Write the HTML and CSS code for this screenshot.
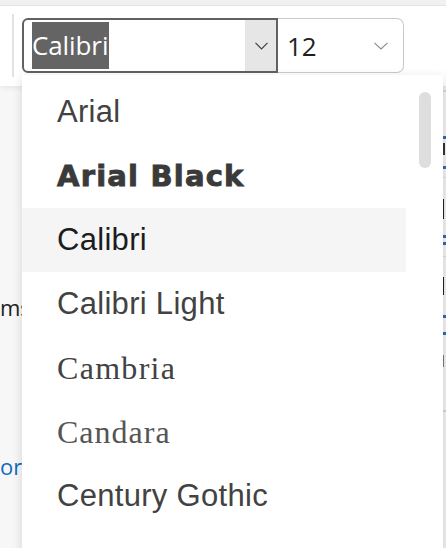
FILE: index.html
```html
<!DOCTYPE html>
<html>
<head>
<meta charset="utf-8">
<link rel="stylesheet" href="styles.css">
</head>
<body>
<div class="app">
  <div class="topstrip"></div>
  <div class="toolbar">
    <div class="sep"></div>
    <div class="combo font-combo">
      <div class="field"><span class="sel">Calibri</span></div>
      <div class="btn">
        <svg width="13" height="8" viewBox="0 0 13 8"><path d="M0.5 0.8 L6.5 6.8 L12.5 0.8" fill="none" stroke="#404040" stroke-width="1.2"/></svg>
      </div>
    </div>
    <div class="combo size-combo">
      <div class="field size-field">12</div>
      <div class="btn2">
        <svg width="14" height="8" viewBox="0 0 14 8"><path d="M0.5 0.8 L7 7 L13.5 0.8" fill="none" stroke="#8a8a8a" stroke-width="1.1"/></svg>
      </div>
    </div>
  </div>
  <div class="page">
    <div class="left-col">
      <div class="l1">ms</div>
      <div class="l2">or</div>
    </div>
    <div class="right-col">
      <div class="r r-gray1"></div>
      <div class="r r-blue1"></div>
      <div class="r r-black1"></div>
      <div class="r r-blue2"></div>
      <div class="r r-line1"></div>
      <div class="r r-black2"></div>
      <div class="r r-blue3"></div>
      <div class="r r-blue4"></div>
      <div class="r r-line2"></div>
      <div class="r r-black3"></div>
      <div class="r r-blue5"></div>
      <div class="r r-blue6"></div>
      <div class="r r-black4"></div>
      <div class="r r-line3"></div>
    </div>
  </div>

  <div class="dropdown">
    <div class="list">
      <div class="item f-arial">Arial</div>
      <div class="item f-black">Arial Black</div>
      <div class="item f-calibri active">Calibri</div>
      <div class="item f-light">Calibri Light</div>
      <div class="item f-cambria">Cambria</div>
      <div class="item f-candara">Candara</div>
      <div class="item f-century">Century Gothic</div>
    </div>
    <div class="track"><div class="thumb"></div></div>
  </div>
</div>
</body>
</html>
```
FILE: styles.css
```css
html, body {
  margin: 0;
  padding: 0;
}
body {
  width: 446px;
  height: 548px;
  overflow: hidden;
  background: #f6f6f6;
  font-family: "Open Sans", "Noto Sans", sans-serif;
}
.app {
  position: relative;
  width: 446px;
  height: 548px;
  overflow: hidden;
  display: flex;
  flex-direction: column;
}
.topstrip {
  height: 5px;
  background: #f1f1f1;
  border-bottom: 1px solid #e6e6e6;
  flex: none;
}
.toolbar {
  height: 80px;
  flex: none;
  background: #fff;
  display: flex;
  align-items: flex-start;
  box-shadow: 0 2px 5px rgba(0,0,0,0.07);
  position: relative;
  z-index: 1;
}
.sep {
  width: 2px;
  height: 63px;
  background: #e2e2e2;
  margin: 8px 8px 0 12px;
}
.combo {
  margin-top: 12px;
  height: 55px;
  box-sizing: border-box;
  display: flex;
}
.font-combo {
  width: 256px;
  border: 2px solid #616161;
  border-radius: 6px 0 0 6px;
}
.field {
  flex: 1;
  display: flex;
  align-items: center;
  padding-left: 8px;
}
.sel {
  background: #646464;
  color: #fff;
  font-size: 26px;
  line-height: 47px;
  height: 47px;
  padding-right: 1px;
  letter-spacing: -0.1px;
}
.btn {
  width: 30px;
  background: #e6e6e6;
  display: flex;
  align-items: center;
  justify-content: center;
  padding-left: 1px;
}
.size-combo {
  width: 126px;
  border: 1.5px solid #c9c9c9;
  border-left: none;
  border-radius: 0 7px 7px 0;
}
.size-field {
  padding-left: 9px;
  font-size: 26px;
  color: #1f1f1f;
}
.btn2 {
  width: 40px;
  display: flex;
  align-items: center;
  justify-content: center;
  padding-right: 2px;
}
.page {
  flex: 1;
  display: flex;
  justify-content: space-between;
  background: #f7f7f7;
}
.left-col {
  width: 40px;
  font-family: "Open Sans", sans-serif;
  font-size: 22px;
}
.l1 {
  margin-top: 206px;
  color: #222;
}
.l2 {
  margin-top: 129px;
  color: #0f6cbd;
}
.right-col {
  width: 4px;
  display: flex;
  flex-direction: column;
  background: #f0f0f0;
}
.r { flex: none; width: 4px; }
.r-gray1 { height: 2px; margin-top: 4px; background: #d8d8d8; }
.r-blue1 { height: 3px; margin-top: 44px; background: #2b6cb5; }
.r-black1 { height: 12px; margin-top: 4px; background: #333; width: 3px; }
.r-blue2 { height: 3px; margin-top: 11px; background: #2b6cb5; }
.r-line1 { height: 1px; margin-top: 8px; background: #dcdcdc; }
.r-black2 { height: 20px; margin-top: 21px; background: #222; width: 2px; }
.r-blue3 { height: 3px; margin-top: 16px; background: #2b6cb5; }
.r-blue4 { height: 3px; margin-top: 4px; background: #2b6cb5; }
.r-line2 { height: 1px; margin-top: 11px; background: #dcdcdc; }
.r-black3 { height: 18px; margin-top: 20px; background: #222; width: 2px; }
.r-blue5 { height: 3px; margin-top: 20px; background: #2b6cb5; }
.r-blue6 { height: 3px; margin-top: 14px; background: #2b6cb5; }
.r-black4 { height: 12px; margin-top: 20px; background: #777; width: 2px; }
.r-line3 { height: 2px; margin-top: 43px; background: #d4d4d4; }

.dropdown {
  position: absolute;
  left: 22px;
  top: 75px;
  width: 421px;
  height: 480px;
  background: #fff;
  box-shadow: 0 3px 10px rgba(0,0,0,0.14);
  display: flex;
  z-index: 2;
}
.list {
  width: 384px;
  padding-top: 5px;
}
.item {
  height: 64px;
  display: flex;
  align-items: center;
  padding-left: 35px;
  font-size: 31px;
  letter-spacing: 0.3px;
  color: #424242;
  white-space: nowrap;
  font-family: "Liberation Sans", Arial, sans-serif;
}
.item.active {
  background: #f5f5f5;
  color: #1c1c1c;
}
.f-black {
  font-family: "DejaVu Sans", sans-serif;
  font-weight: bold;
  font-size: 29px;
  letter-spacing: 1.2px;
  color: #3a3a3a;
  -webkit-text-stroke: 0.9px #3a3a3a;
}
.f-light {
  font-weight: normal;
}
.f-cambria, .f-candara {
  font-family: "Liberation Serif", serif;
  font-size: 32px;
}
.f-cambria {
  letter-spacing: 1.3px;
}
.f-candara {
  color: #555;
  letter-spacing: 1px;
}
.track {
  flex: 1;
  position: relative;
}
.thumb {
  margin: 17px 0 0 13px;
  width: 12px;
  height: 76px;
  border-radius: 6px;
  background: #dedede;
}
```
